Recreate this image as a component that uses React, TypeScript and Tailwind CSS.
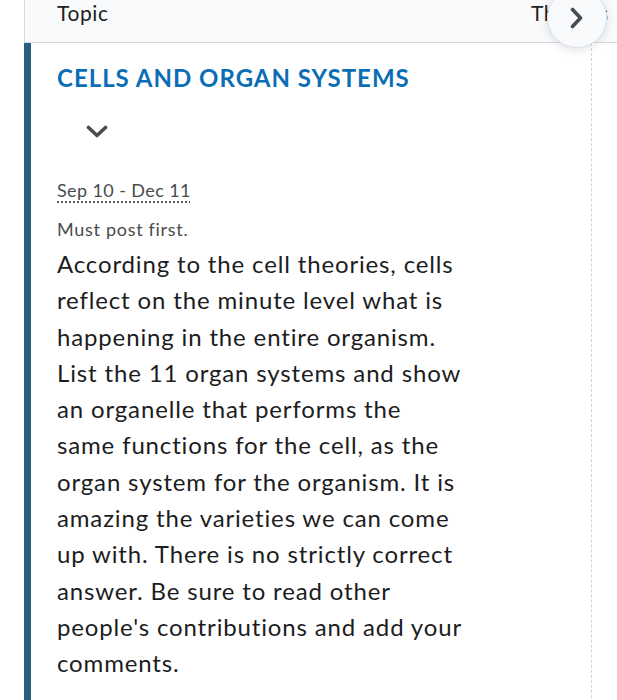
const BODY_LINES = [
  'According to the cell theories, cells',
  'reflect on the minute level what is',
  'happening in the entire organism.',
  'List the 11 organ systems and show',
  'an organelle that performs the',
  'same functions for the cell, as the',
  'organ system for the organism. It is',
  'amazing the varieties we can come',
  'up with. There is no strictly correct',
  'answer. Be sure to read other',
  "people's contributions and add your",
  'comments.',
]

function ChevronDownIcon() {
  return (
    <svg width="22" height="14" viewBox="0 0 22 14" fill="none" className="text-[#494c4e]">
      <polyline points="2.5,2.5 11,10.5 19.5,2.5" stroke="currentColor" strokeWidth="3.6" strokeLinecap="round" strokeLinejoin="round" />
    </svg>
  )
}

function ChevronRightIcon() {
  return (
    <svg width="14" height="22" viewBox="0 0 14 22" fill="none" className="text-[#494c4e]">
      <polyline points="2.5,2.5 10.5,11 2.5,19.5" stroke="currentColor" strokeWidth="3.6" strokeLinecap="round" strokeLinejoin="round" />
    </svg>
  )
}

export default function App() {
  return (
    <div className="relative w-[617px] h-[700px] overflow-hidden bg-white font-['Lato','Open_Sans',sans-serif] text-[#202122]">
      {/* table header row */}
      <div className="ml-[24px] flex h-[43px] border-l border-b border-[#d3d9e3] bg-[#f9fafc]">
        <div className="w-[567px] pl-[32px] text-[21px] leading-[26px] tracking-[0.6px] text-[#202122]">Topic</div>
        <div className="-ml-[61px] text-[21px] leading-[26px] tracking-[0.6px] text-[#202122]">Threads</div>
      </div>

      {/* topic row */}
      <div className="ml-[24px] flex">
        <div className="w-[7px] shrink-0 bg-[#2a5e80]" />
        <div className="w-[561px] border-r border-dashed border-[#cdd5dc] pl-[26px] pt-[20px] pb-10">
          <h2 className="text-[24px] leading-[30px] font-bold text-[#0a6db5] tracking-[1px]">
            CELLS AND ORGAN SYSTEMS
          </h2>
          <div className="mt-[32px] ml-[29px] h-[14px]">
            <ChevronDownIcon />
          </div>
          <div className="mt-[39px] text-[18px] leading-[24px] tracking-[0.4px] text-[#494c4e]">
            <span className="underline decoration-dotted decoration-[#494c4e] underline-offset-[5px]">
              Sep 10 - Dec 11
            </span>
          </div>
          <div className="mt-[15px] text-[18px] leading-[24px] tracking-[0.7px] text-[#494c4e]">Must post first.</div>
          <div className="mt-[5px] text-[24px] leading-[36.3px] tracking-[0.85px] text-[#1c1d1e]">
            {BODY_LINES.map((line) => (
              <div key={line} className="whitespace-nowrap">
                {line}
              </div>
            ))}
            <div className="mt-[10px] whitespace-nowrap">Unread posts are marked in bold.</div>
          </div>
        </div>
      </div>

      {/* scroll button */}
      <button className="absolute left-[547px] -top-[12px] flex h-[60px] w-[60px] items-center justify-center rounded-full border border-[#dde3ea] bg-[#f9fafc] shadow-[0_2px_10px_rgba(0,0,0,0.12)]">
        <ChevronRightIcon />
      </button>
    </div>
  )
}
